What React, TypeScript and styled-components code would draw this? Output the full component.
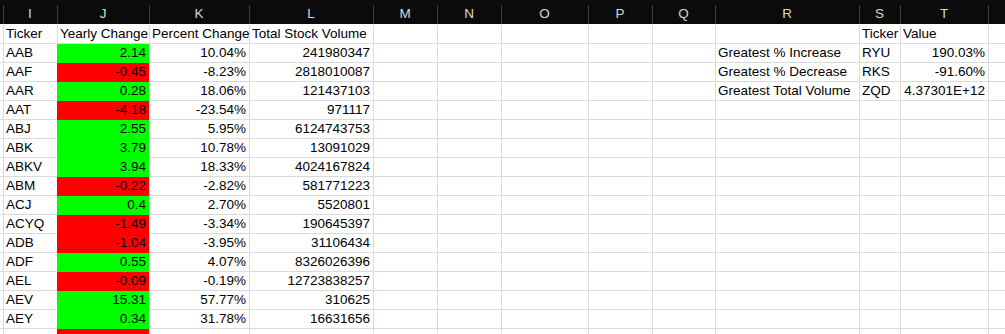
import React from 'react'
import styled, { createGlobalStyle } from 'styled-components'

const GlobalStyle = createGlobalStyle`
  html, body {
    margin: 0;
    padding: 0;
    background: #ffffff;
  }
  body {
    font-family: 'Liberation Sans', Arial, sans-serif;
  }
`

// column letters and pixel widths (each width includes the left gridline)
const COLUMNS: { letter: string; width: number }[] = [
  { letter: '', width: 3 },
  { letter: 'I', width: 54 },
  { letter: 'J', width: 92 },
  { letter: 'K', width: 100 },
  { letter: 'L', width: 124 },
  { letter: 'M', width: 64 },
  { letter: 'N', width: 64 },
  { letter: 'O', width: 87 },
  { letter: 'P', width: 64 },
  { letter: 'Q', width: 63 },
  { letter: 'R', width: 144 },
  { letter: 'S', width: 41 },
  { letter: 'T', width: 88 },
  { letter: '', width: 17 },
]

const TEMPLATE = COLUMNS.map(c => `${c.width}px`).join(' ')

type Fill = 'green' | 'red' | undefined
type Align = 'left' | 'right'

interface CellData {
  text?: string
  align?: Align
  fill?: Fill
}

const FILL_COLORS = {
  green: '#00ff00',
  red: '#ff0000',
}

const GRID = '#dadada'

const Window = styled.div`
  width: 1005px;
  height: 334px;
  overflow: hidden;
  background: #ffffff;
  display: flex;
  flex-direction: column;
`

const ColumnBar = styled.div`
  display: grid;
  grid-template-columns: ${TEMPLATE};
  height: 24px;
  flex-shrink: 0;
  background: #0b0b0b;
  margin-bottom: 1px;
`

const ColumnLetter = styled.div<{ $first: boolean }>`
  position: relative;
  display: flex;
  align-items: center;
  justify-content: center;
  padding-top: 3px;
  color: #d8d8d8;
  font-size: 13.5px;

  &::before {
    content: '';
    display: ${p => (p.$first ? 'none' : 'block')};
    position: absolute;
    left: 0;
    top: 5px;
    bottom: 0;
    width: 1px;
    background: #3e3e3e;
  }
`

const Sheet = styled.div`
  display: flex;
  flex-direction: column;
`

const Row = styled.div`
  display: grid;
  grid-template-columns: ${TEMPLATE};
  height: 19px;
  flex-shrink: 0;
`

const Cell = styled.div<{ $align: Align; $fill: Fill; $first: boolean }>`
  box-sizing: border-box;
  display: flex;
  align-items: center;
  justify-content: ${p => (p.$align === 'right' ? 'flex-end' : 'flex-start')};
  padding: 0 3px 0 2px;
  height: 19px;
  white-space: nowrap;
  font-size: 13.5px;
  line-height: 18px;
  color: #000000;
  background: ${p => (p.$fill ? FILL_COLORS[p.$fill] : '#ffffff')};
  border-left: ${p => (p.$first ? 'none' : `1px solid ${p.$fill ? FILL_COLORS[p.$fill] : GRID}`)};
  border-bottom: 1px solid ${p => (p.$fill ? FILL_COLORS[p.$fill] : GRID)};
  overflow: visible;
  position: relative;
  z-index: ${p => (p.$align === 'left' ? 1 : 0)};
`

const CellText = styled.span`
  background: inherit;
`

const stocks: [string, string, string, string, Fill][] = [
  ['AAB', '2.14', '10.04%', '241980347', 'green'],
  ['AAF', '-0.45', '-8.23%', '2818010087', 'red'],
  ['AAR', '0.28', '18.06%', '121437103', 'green'],
  ['AAT', '-4.18', '-23.54%', '971117', 'red'],
  ['ABJ', '2.55', '5.95%', '6124743753', 'green'],
  ['ABK', '3.79', '10.78%', '13091029', 'green'],
  ['ABKV', '3.94', '18.33%', '4024167824', 'green'],
  ['ABM', '-0.22', '-2.82%', '581771223', 'red'],
  ['ACJ', '0.4', '2.70%', '5520801', 'green'],
  ['ACYQ', '-1.49', '-3.34%', '190645397', 'red'],
  ['ADB', '-1.04', '-3.95%', '31106434', 'red'],
  ['ADF', '0.55', '4.07%', '8326026396', 'green'],
  ['AEL', '-0.09', '-0.19%', '12723838257', 'red'],
  ['AEV', '15.31', '57.77%', '310625', 'green'],
  ['AEY', '0.34', '31.78%', '16631656', 'green'],
  // next row only peeks in at the bottom edge
  ['', '', '', '', 'red'],
]

const summary: Record<number, [string, string, string]> = {
  1: ['Greatest % Increase', 'RYU', '190.03%'],
  2: ['Greatest % Decrease', 'RKS', '-91.60%'],
  3: ['Greatest Total Volume', 'ZQD', '4.37301E+12'],
}

const buildRows = (): CellData[][] => {
  const rows: CellData[][] = []
  const header: CellData[] = COLUMNS.map(() => ({}))
  header[1] = { text: 'Ticker' }
  header[2] = { text: 'Yearly Change' }
  header[3] = { text: 'Percent Change' }
  header[4] = { text: 'Total Stock Volume' }
  header[11] = { text: 'Ticker' }
  header[12] = { text: 'Value' }
  rows.push(header)

  stocks.forEach(([ticker, change, pct, volume, fill], i) => {
    const row: CellData[] = COLUMNS.map(() => ({}))
    row[1] = { text: ticker }
    row[2] = { text: change, align: 'right', fill }
    row[3] = { text: pct, align: 'right' }
    row[4] = { text: volume, align: 'right' }
    const s = summary[i + 1]
    if (s) {
      row[10] = { text: s[0] }
      row[11] = { text: s[1] }
      row[12] = { text: s[2], align: 'right' }
    }
    rows.push(row)
  })
  return rows
}

export default function App() {
  const rows = buildRows()
  return (
    <>
      <GlobalStyle />
      <Window>
        <ColumnBar>
          {COLUMNS.map((c, i) => (
            <ColumnLetter key={i} $first={i === 0}>
              {c.letter}
            </ColumnLetter>
          ))}
        </ColumnBar>
        <Sheet>
          {rows.map((row, r) => (
            <Row key={r}>
              {row.map((cell, c) => (
                <Cell key={c} $align={cell.align ?? 'left'} $fill={cell.fill} $first={c === 0}>
                  {cell.text && <CellText>{cell.text}</CellText>}
                </Cell>
              ))}
            </Row>
          ))}
        </Sheet>
      </Window>
    </>
  )
}
